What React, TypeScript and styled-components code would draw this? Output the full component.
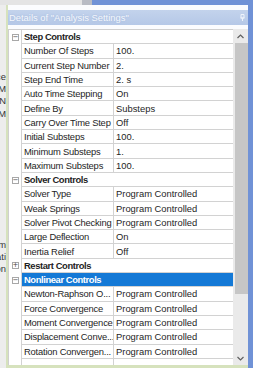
import React from 'react';
import styled, { createGlobalStyle } from 'styled-components';

const GlobalStyle = createGlobalStyle`
    html, body {
        margin: 0;
        padding: 0;
        width: 253px;
        height: 368px;
        overflow: hidden;
        background: #ececec;
        font-family: 'Liberation Sans', Arial, sans-serif;
    }
`;

const ROW_H = 14.3;

type Prop = { name: string; value: string };
type Category = { title: string; expanded: boolean; selected?: boolean; props: Prop[] };

const PC = 'Program Controlled';

const categories: Category[] = [
    {
        title: 'Step Controls',
        expanded: true,
        props: [
            { name: 'Number Of Steps', value: '100.' },
            { name: 'Current Step Number', value: '2.' },
            { name: 'Step End Time', value: '2. s' },
            { name: 'Auto Time Stepping', value: 'On' },
            { name: 'Define By', value: 'Substeps' },
            { name: 'Carry Over Time Step', value: 'Off' },
            { name: 'Initial Substeps', value: '100.' },
            { name: 'Minimum Substeps', value: '1.' },
            { name: 'Maximum Substeps', value: '100.' },
        ],
    },
    {
        title: 'Solver Controls',
        expanded: true,
        props: [
            { name: 'Solver Type', value: PC },
            { name: 'Weak Springs', value: PC },
            { name: 'Solver Pivot Checking', value: PC },
            { name: 'Large Deflection', value: 'On' },
            { name: 'Inertia Relief', value: 'Off' },
        ],
    },
    { title: 'Restart Controls', expanded: false, props: [] },
    {
        title: 'Nonlinear Controls',
        expanded: true,
        selected: true,
        props: [
            { name: 'Newton-Raphson O...', value: PC },
            { name: 'Force Convergence', value: PC },
            { name: 'Moment Convergence', value: PC },
            { name: 'Displacement Conve...', value: PC },
            { name: 'Rotation Convergen...', value: PC },
            { name: '', value: '' },
        ],
    },
];

// clipped tree labels peeking out from behind the panel
const fragments = [
    { text: 'ce', top: 66 },
    { text: 'M', top: 0 },
    { text: 'N', top: 0 },
    { text: 'M', top: 1 },
    { text: 'm', top: 119 },
    { text: 'ati', top: 0 },
    { text: 'on', top: 0 },
];

const Screen = styled.div`
    display: flex;
    flex-direction: column;
    width: 253px;
    height: 368px;
`;

const TopStrip = styled.div`
    display: flex;
    height: 5px;
    flex-shrink: 0;
`;

const TopGray = styled.div`
    width: 82px;
    background: #e4e4e4;
`;

const TopSep = styled.div`
    width: 10px;
    background: #b9bcc4;
`;

const TopBlue = styled.div`
    flex: 1;
    background: #7092d6;
`;

const Body = styled.div`
    flex: 1;
    display: flex;
    min-height: 0;
`;

const LeftStrip = styled.div`
    width: 6px;
    flex-shrink: 0;
    overflow: hidden;
    background: #ededed;
    display: flex;
    flex-direction: column;
    align-items: flex-end;
`;

const Fragment = styled.div<{ $top: number }>`
    margin-top: ${(p) => p.$top}px;
    height: 12px;
    line-height: 12px;
    font-size: 9.4px;
    color: #333;
    white-space: nowrap;
`;

const Panel = styled.div`
    flex: 1;
    display: flex;
    flex-direction: column;
    border-left: 2px solid #d6e2bd;
    border-bottom: 3px solid #d6e2bd;
    background: #fbfcfe;
    min-width: 0;
`;

const RightFrame = styled.div`
    width: 5px;
    flex-shrink: 0;
    background: #7092d6;
`;

const TitleBar = styled.div`
    margin-top: 5px;
    height: 15px;
    display: flex;
    align-items: center;
    justify-content: space-between;
    padding: 0 3px 0 1px;
    background: linear-gradient(#c3d3ec, #b5c8e7);
    color: #f4f7fc;
    font-size: 9.4px;
    white-space: nowrap;
    text-shadow: 0 0 2px #9fb4d9;
`;

const Pin = () => (
    <svg width='5' height='7' viewBox='0 0 5 7'>
        <path d='M1 0.5h3v3.5h-3z M0.5 4h4 M2.5 4v3' fill='none' stroke='#eef3fa' strokeWidth='1' />
    </svg>
);

const Content = styled.div`
    margin-top: 4px;
    flex: 1;
    display: flex;
    min-height: 0;
    background: #fff;
`;

const Grid = styled.div`
    flex: 1;
    display: flex;
    flex-direction: column;
    overflow: hidden;
    border-left: 1px solid #cfcfcf;
    border-top: 1px solid #cfcfcf;
    font-size: 9.4px;
    color: #1e1e1e;
`;

const Row = styled.div`
    display: flex;
    height: ${ROW_H}px;
    flex-shrink: 0;
`;

const Gutter = styled.div`
    width: 12px;
    flex-shrink: 0;
    display: flex;
    align-items: center;
    justify-content: center;
    background: #fff;
    border-right: 1px solid #d2d2d2;
`;

const Expander = styled.div`
    width: 7px;
    height: 7px;
    box-sizing: border-box;
    border: 1px solid #a8a8a8;
    background: #fff;
    font-size: 7px;
    line-height: 5px;
    text-align: center;
    color: #444;
    font-family: 'DejaVu Sans', sans-serif;
`;

const CategoryCell = styled.div<{ $selected?: boolean }>`
    flex: 1;
    display: flex;
    align-items: center;
    padding-left: 2px;
    font-weight: bold;
    letter-spacing: -0.4px;
    box-sizing: border-box;
    border-bottom: 1px solid #d2d2d2;
    background: ${(p) => (p.$selected ? '#1479d6' : '#fff')};
    color: ${(p) => (p.$selected ? '#fff' : '#1e1e1e')};
`;

const NameCell = styled.div`
    width: 92px;
    flex-shrink: 0;
    display: flex;
    align-items: center;
    padding-left: 2px;
    box-sizing: border-box;
    border-right: 1px solid #d2d2d2;
    border-bottom: 1px solid #d2d2d2;
    letter-spacing: -0.2px;
    white-space: nowrap;
    overflow: hidden;
`;

const ValueCell = styled.div`
    flex: 1;
    display: flex;
    align-items: center;
    padding-left: 2px;
    box-sizing: border-box;
    border-bottom: 1px solid #d2d2d2;
    white-space: nowrap;
    overflow: hidden;
`;

const Scrollbar = styled.div`
    width: 15px;
    flex-shrink: 0;
    display: flex;
    flex-direction: column;
    background: #eaeaea;
`;

const Arrow = styled.div`
    height: 14px;
    display: flex;
    align-items: center;
    justify-content: center;
    flex-shrink: 0;
`;

const Thumb = styled.div`
    height: 251px;
    margin: 0 0 0 2px;
    background: #c6c6c6;
    flex-shrink: 0;
`;

const Track = styled.div`
    flex: 1;
`;

const Chevron = ({ up }: { up?: boolean }) => (
    <svg width='7' height='5' viewBox='0 0 7 5'>
        <path d={up ? 'M0.5 4L3.5 1L6.5 4' : 'M0.5 1L3.5 4L6.5 1'} fill='none' stroke='#606060' strokeWidth='1.2' />
    </svg>
);

export default function App() {
    return (
        <Screen>
            <GlobalStyle />
            <TopStrip>
                <TopGray />
                <TopSep />
                <TopBlue />
            </TopStrip>
            <Body>
                <LeftStrip>
                    {fragments.map((f, i) => (
                        <Fragment key={i} $top={f.top}>
                            {f.text}
                        </Fragment>
                    ))}
                </LeftStrip>
                <Panel>
                    <TitleBar>
                        <span>Details of "Analysis Settings"</span>
                        <Pin />
                    </TitleBar>
                    <Content>
                        <Grid>
                            {categories.map((c) => (
                                <React.Fragment key={c.title}>
                                    <Row>
                                        <Gutter>
                                            <Expander>{c.expanded ? '−' : '+'}</Expander>
                                        </Gutter>
                                        <CategoryCell $selected={c.selected}>{c.title}</CategoryCell>
                                    </Row>
                                    {c.expanded &&
                                        c.props.map((p, i) => (
                                            <Row key={i}>
                                                <Gutter />
                                                <NameCell>{p.name}</NameCell>
                                                <ValueCell>{p.value}</ValueCell>
                                            </Row>
                                        ))}
                                </React.Fragment>
                            ))}
                        </Grid>
                        <Scrollbar>
                            <Arrow>
                                <Chevron up />
                            </Arrow>
                            <Thumb />
                            <Track />
                            <Arrow>
                                <Chevron />
                            </Arrow>
                        </Scrollbar>
                    </Content>
                </Panel>
                <RightFrame />
            </Body>
        </Screen>
    );
}
